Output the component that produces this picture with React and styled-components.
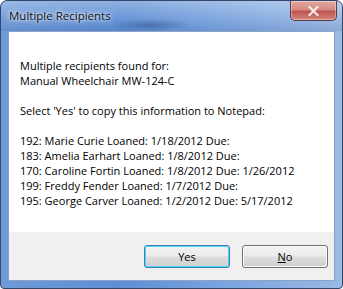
import React from 'react';
import styled, { createGlobalStyle } from 'styled-components';

const Global = createGlobalStyle`
  html, body { margin: 0; padding: 0; background: #fff; }
  body { font-family: "Open Sans", "Noto Sans", sans-serif; }
`;

const Frame = styled.div`
  width: 343px;
  height: 289px;
  box-sizing: border-box;
  display: flex;
  flex-direction: column;
  border: 1px solid #34476a;
  border-radius: 7px 7px 4px 4px;
  background: linear-gradient(90deg, #6f9ad8 0%, #5f8ed4 35%, #7aa4de 65%, #9ab9e5 100%);
  overflow: hidden;
`;

const TitleBar = styled.div`
  height: 30px;
  display: flex;
  align-items: flex-start;
  justify-content: space-between;
  padding: 0 5px 0 8px;
  background:
    radial-gradient(ellipse 40px 6px at 150px 24px, rgba(20,50,110,0.35), transparent),
    linear-gradient(180deg, rgba(255,255,255,0.3) 0%, rgba(255,255,255,0.08) 55%, rgba(30,60,120,0.12) 100%);
`;

const Title = styled.span`
  margin-top: 7px;
  font-size: 11.5px;
  color: #111;
  text-shadow: 0 0 6px rgba(255,255,255,0.95), 0 0 3px rgba(255,255,255,0.8);
`;

const CloseButton = styled.div`
  width: 47px;
  height: 20px;
  box-sizing: border-box;
  border: 1px solid #5d3a44;
  border-top: none;
  border-radius: 0 0 5px 5px;
  background: linear-gradient(180deg, #e3aaa3 0%, #d48a82 45%, #c0564e 55%, #d3857b 100%);
  display: flex;
  align-items: center;
  justify-content: center;
  box-shadow: inset 0 0 0 1px rgba(255,255,255,0.35);
`;

const Client = styled.div`
  flex: 1;
  margin: 0 7px 7px 7px;
  display: flex;
  flex-direction: column;
  border: 1px solid #8aa3c8;
  background: #fff;
`;

const Body = styled.div`
  flex: 1;
  padding: 26px 11px 0 11px;
  font-size: 11px;
  line-height: 15px;
  color: #000;
`;

const Line = styled.div`
  white-space: nowrap;
  height: 15px;
`;

const Gap = styled.div`
  height: ${({ $h }) => $h}px;
`;

const Footer = styled.div`
  height: 48px;
  background: #f0f0f0;
  display: flex;
  align-items: center;
  justify-content: flex-end;
  gap: 12px;
  padding: 0 6px 0 0;
  box-sizing: border-box;
`;

const Button = styled.button`
  width: 86px;
  height: 23px;
  box-sizing: border-box;
  border-radius: 3px;
  font-family: inherit;
  font-size: 11px;
  color: #000;
  padding: 0;
  border: 1px solid ${({ $primary }) => ($primary ? '#3c7fb1' : '#707070')};
  background: linear-gradient(180deg, #f2f2f2 0%, #ebebeb 48%, #dddddd 52%, #cfcfcf 100%);
  box-shadow: inset 0 0 0 1px ${({ $primary }) => ($primary ? '#48d8fb' : '#fcfcfc')};
`;

const lines = [
  '192: Marie Curie Loaned: 1/18/2012 Due:',
  '183: Amelia Earhart Loaned: 1/8/2012 Due:',
  '170: Caroline Fortin Loaned: 1/8/2012 Due: 1/26/2012',
  '199: Freddy Fender Loaned: 1/7/2012 Due:',
  '195: George Carver Loaned: 1/2/2012 Due: 5/17/2012',
];

export default function App() {
  return (
    <>
      <Global />
      <Frame>
        <TitleBar>
          <Title>Multiple Recipients</Title>
          <CloseButton>
            <svg width="11" height="10" viewBox="0 0 11 10">
              <path d="M1.5 1 L9.5 9 M9.5 1 L1.5 9" stroke="#fff" strokeWidth="2.2" strokeLinecap="square" opacity="0.85" />
            </svg>
          </CloseButton>
        </TitleBar>
        <Client>
          <Body>
            <Line>Multiple recipients found for:</Line>
            <Line>Manual Wheelchair MW-124-C</Line>
            <Gap $h={15} />
            <Line>Select 'Yes' to copy this information to Notepad:</Line>
            <Gap $h={15} />
            {lines.map((l) => (
              <Line key={l}>{l}</Line>
            ))}
          </Body>
          <Footer>
            <Button $primary>Yes</Button>
            <Button><u>N</u>o</Button>
          </Footer>
        </Client>
      </Frame>
    </>
  );
}
